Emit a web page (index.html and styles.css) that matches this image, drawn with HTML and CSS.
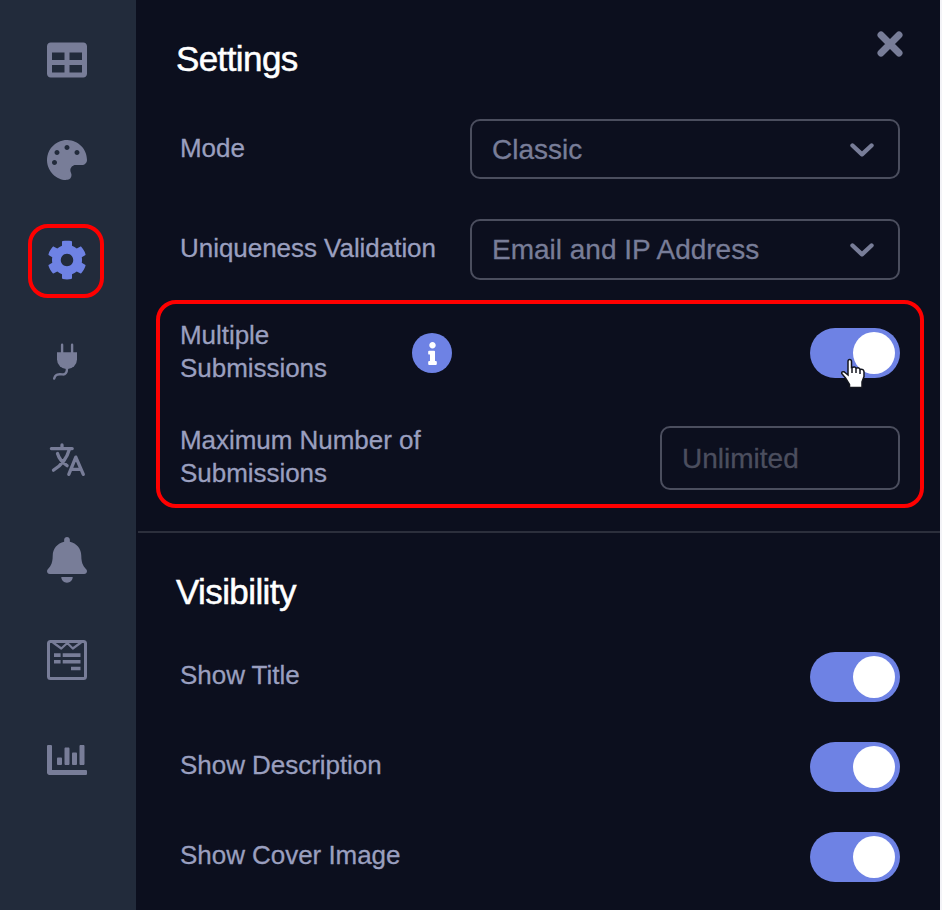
FILE: index.html
```
<!DOCTYPE html>
<html lang="en">
<head>
  <meta charset="UTF-8" />
  <meta name="viewport" content="width=device-width, initial-scale=1.0"/>
  <title>Form Settings</title>
  <link rel="stylesheet" href="styles.css">
</head>
<body>
  <div class="app">
    <!-- Sidebar -->
    <nav class="sidebar">
      <a class="nav-item" title="Fields">
        <svg width="40" height="40" viewBox="0 0 512 512"><path d="M464 32H48C21.49 32 0 53.49 0 80v352c0 26.51 21.49 48 48 48h416c26.51 0 48-21.49 48-48V80c0-26.51-21.49-48-48-48zM224 416H64v-96h160v96zm0-160H64v-96h160v96zm224 160H288v-96h160v96zm0-160H288v-96h160v96z"/></svg>
      </a>
      <a class="nav-item" title="Theme">
        <svg width="40" height="40" viewBox="0 0 512 512"><path d="M204.3 5C104.9 24.4 24.8 104.3 5.2 203.4c-37 187 131.7 326.4 258.8 306.7 41.2-6.4 61.4-54.6 42.5-91.7-23.1-45.4 9.9-98.4 60.9-98.4h79.7c35.8 0 64.8-29.6 64.9-65.3C511.5 97.1 368.1-26.9 204.3 5zM96 320c-17.7 0-32-14.3-32-32s14.3-32 32-32 32 14.3 32 32-14.3 32-32 32zm32-128c-17.7 0-32-14.3-32-32s14.3-32 32-32 32 14.3 32 32-14.3 32-32 32zm128-64c-17.7 0-32-14.3-32-32s14.3-32 32-32 32 14.3 32 32-14.3 32-32 32zm128 64c-17.7 0-32-14.3-32-32s14.3-32 32-32 32 14.3 32 32-14.3 32-32 32z"/></svg>
      </a>
      <a class="nav-item active" title="Settings">
        <svg width="40" height="40" viewBox="0 0 512 512"><path d="M487.4 315.7l-42.6-24.6c4.3-23.2 4.3-47 0-70.2l42.6-24.6c4.9-2.8 7.1-8.6 5.5-14-11.1-35.6-30-67.8-54.7-94.6-3.8-4.1-10-5.1-14.8-2.3L380.8 110c-17.9-15.4-38.5-27.3-60.8-35.1V25.8c0-5.6-3.9-10.5-9.4-11.7-36.7-8.2-74.3-7.8-109.2 0-5.5 1.2-9.4 6.1-9.4 11.7V75c-22.2 7.9-42.8 19.8-60.8 35.1L88.7 85.5c-4.9-2.8-11-1.9-14.8 2.3-24.7 26.7-43.6 58.9-54.7 94.6-1.7 5.4.6 11.2 5.5 14L67.3 221c-4.3 23.2-4.3 47 0 70.2l-42.6 24.6c-4.9 2.8-7.1 8.6-5.5 14 11.1 35.6 30 67.8 54.7 94.6 3.8 4.1 10 5.1 14.8 2.3l42.6-24.6c17.9 15.4 38.5 27.3 60.8 35.1v49.2c0 5.6 3.9 10.5 9.4 11.7 36.7 8.2 74.3 7.8 109.2 0 5.5-1.2 9.4-6.1 9.4-11.7v-49.2c22.2-7.9 42.8-19.8 60.8-35.1l42.6 24.6c4.9 2.8 11 1.9 14.8-2.3 24.7-26.7 43.6-58.9 54.7-94.6 1.5-5.5-.7-11.3-5.6-14.1zM256 336c-44.1 0-80-35.9-80-80s35.9-80 80-80 80 35.9 80 80-35.9 80-80 80z"/></svg>
      </a>
      <a class="nav-item" title="Integrations">
        <svg width="40" height="40" viewBox="0 0 40 40">
          <path d="M10 12.3h20v7a10 10 0 0 1-20 0z"/>
          <path class="line" stroke-width="2.4" d="M15.1 4.8V13M25.1 4.8V13M20 28.5c0 4-1.500 6.2-4.500 5.900-3.500-.3-7.300-.8-8.300 4.200"/>
        </svg>
      </a>
      <a class="nav-item" title="Translations">
        <svg width="40" height="40" viewBox="0 0 40 40">
          <path class="line" stroke-width="3.3" d="M4.4 8.6h20.8M15 5v3.5M22.5 9c-2.500 9-8 16.400-16 21.200M10.500 13.500c1.500 5 4.700 9 9.600 12.200M21.800 34.400l7-17.300 7.500 17.300M24 29.400h10"/>
        </svg>
      </a>
      <a class="nav-item" title="Notifications">
        <svg width="40" height="45.7" viewBox="0 0 448 512"><path d="M224 512c35.32 0 63.97-28.65 63.97-64H160.03c0 35.35 28.65 64 63.97 64zm215.39-149.71c-19.32-20.76-55.47-51.99-55.47-154.29 0-77.7-54.48-139.9-127.94-155.16V32c0-17.67-14.32-32-31.98-32s-31.98 14.33-31.98 32v20.84C118.56 68.1 64.08 130.3 64.08 208c0 102.3-36.15 133.53-55.47 154.29-6 6.45-8.66 14.16-8.61 21.71.11 16.4 12.98 32 32.1 32h383.8c19.12 0 32-15.6 32.1-32 .05-7.55-2.61-15.27-8.61-21.71z"/></svg>
      </a>
      <a class="nav-item" title="Submissions">
        <svg width="40" height="40" viewBox="0 0 40 40">
          <rect class="line" stroke-width="3" x="1.5" y="1.5" width="37" height="37" rx="2"/>
          <path class="line" stroke-width="2.2" d="M6 2.5l8.3 6L20.3 3l5.5 5.5L34 2.5"/>
          <path d="M7 13.3h6.6V17H7zM15.7 13.3h17.8V17H15.7zM7 20h6.6v3.5H7zM15.7 20h17.8v3.5H15.7zM24 26.7h9.5v3.6H24z"/>
        </svg>
      </a>
      <a class="nav-item" title="Reports">
        <svg width="40" height="40" viewBox="0 0 512 512"><path d="M332.8 320h38.4c6.4 0 12.8-6.4 12.8-12.8V172.8c0-6.4-6.4-12.8-12.8-12.8h-38.4c-6.4 0-12.8 6.4-12.8 12.8v134.4c0 6.4 6.4 12.8 12.8 12.8zm96 0h38.4c6.4 0 12.8-6.4 12.8-12.8V76.8c0-6.4-6.4-12.8-12.8-12.8h-38.4c-6.4 0-12.8 6.4-12.8 12.8v230.4c0 6.4 6.4 12.8 12.8 12.8zm-288 0h38.4c6.4 0 12.8-6.4 12.8-12.8v-70.4c0-6.4-6.4-12.8-12.8-12.8h-38.4c-6.4 0-12.8 6.4-12.8 12.8v70.4c0 6.4 6.4 12.8 12.8 12.8zm96 0h38.4c6.4 0 12.8-6.4 12.8-12.8V108.8c0-6.4-6.4-12.8-12.8-12.8h-38.4c-6.4 0-12.8 6.4-12.8 12.8v198.4c0 6.4 6.4 12.8 12.8 12.8zM496 384H64V80c0-8.84-7.16-16-16-16H16C7.16 64 0 71.16 0 80v336c0 17.67 14.33 32 32 32h464c8.84 0 16-7.16 16-16v-32c0-8.84-7.16-16-16-16z"/></svg>
      </a>
    </nav>

    <!-- Settings Panel -->
    <main class="panel">
      <section class="section">
        <div class="section-header">
          <h2>Settings</h2>
          <button class="close" aria-label="Close">
            <svg width="26" height="26" viewBox="0 0 26 26"><path class="line" stroke-width="7" d="M4 4l18 18M22 4L4 22"/></svg>
          </button>
        </div>
        <div class="row">
          <span class="label">Mode</span>
          <div class="select">
            <span>Classic</span>
            <svg width="24" height="14" viewBox="0 0 24 14"><path class="line" stroke-width="4.4" d="M2.5 2.5L12 11.3l9.5-8.8"/></svg>
          </div>
        </div>
        <div class="row">
          <span class="label">Uniqueness Validation</span>
          <div class="select tall">
            <span>Email and IP Address</span>
            <svg width="24" height="14" viewBox="0 0 24 14"><path class="line" stroke-width="4.4" d="M2.5 2.5L12 11.3l9.5-8.8"/></svg>
          </div>
        </div>
        <div class="highlight-group">
          <div class="row">
            <span class="label label-narrow">Multiple Submissions</span>
            <span class="info">
              <svg width="9" height="23" viewBox="0 0 192 512"><path d="M20 424.229h20V279.771H20c-11.046 0-20-8.954-20-20V212c0-11.046 8.954-20 20-20h112c11.046 0 20 8.954 20 20v212.229h20c11.046 0 20 8.954 20 20V492c0 11.046-8.954 20-20 20H20c-11.046 0-20-8.954-20-20v-47.771c0-11.046 8.954-20 20-20zM96 0C56.235 0 24 32.235 24 72s32.235 72 72 72 72-32.235 72-72S135.764 0 96 0z"/></svg>
            </span>
            <span class="switch">
              <!-- Pointer -->
              <svg class="cursor" width="26" height="32" viewBox="0 0 26 32"><path d="M8 14.5V3.5Q8 1.5 9.7 1.5T11.5 3.5V9.5Q15.5 8 16 10.3Q19.3 9 20 11.4Q23.8 10.7 24 14V18.5L22 24V29.5H9.5V26.5L5.5 20L1.7 15.5Q1.5 13.3 4 13.7L8 17z"/><path class="fingers" d="M12 9.5v5.5M16 10.5V15M20 11.5V16"/></svg>
            </span>
          </div>
          <div class="row">
            <span class="label label-wide">Maximum Number of Submissions</span>
            <input class="number" type="text" placeholder="Unlimited">
          </div>
        </div>
      </section>

      <section class="section visibility">
        <h2>Visibility</h2>
        <div class="row">
          <span class="label">Show Title</span>
          <span class="switch"></span>
        </div>
        <div class="row">
          <span class="label">Show Description</span>
          <span class="switch"></span>
        </div>
        <div class="row">
          <span class="label">Show Cover Image</span>
          <span class="switch"></span>
        </div>
      </section>
    </main>
  </div>
</body>
</html>
```
FILE: styles.css
```
*,
*::before,
*::after {
  box-sizing: border-box;
}

body {
  margin: 0;
  background: #f3f3f7;
  font-family: "Liberation Sans", Arial, sans-serif;
  overflow: hidden;
}

svg {
  display: block;
  fill: currentColor;
}

.line {
  fill: none;
  stroke: currentColor;
  stroke-linecap: round;
  stroke-linejoin: round;
}

.app {
  display: flex;
  width: 940px;
  height: 910px;
  background: #0c0f1e;
}

/* Sidebar */
.sidebar {
  flex-shrink: 0;
  width: 136px;
  padding: 10px 0 0;
  background: #222b3b;
  color: #787d98;
}

.nav-item {
  position: relative;
  display: flex;
  align-items: center;
  justify-content: center;
  height: 100px;
  padding-right: 2px;
}

.nav-item.active {
  color: #6e82e4;
}

.nav-item.active::after {
  content: "";
  position: absolute;
  left: 28px;
  top: 14px;
  width: 76px;
  height: 74px;
  border: 4px solid #ff0000;
  border-radius: 20px;
}

/* Panel */
.panel {
  flex: 1;
  min-width: 0;
  padding-left: 2px;
}

.section {
  padding: 0 40px 0 42px;
}

h2 {
  margin: 0 0 0 -4px;
  font-size: 35px;
  font-weight: normal;
  line-height: 40px;
  letter-spacing: -0.6px;
  color: #fff;
  -webkit-text-stroke: 0.5px #fff;
}

.section-header {
  display: flex;
  justify-content: space-between;
  height: 99px;
  padding-top: 39px;
}

.close {
  height: 26px;
  margin: -8px -3px 0 0;
  padding: 0;
  border: none;
  background: none;
  color: #787d98;
}

.row {
  display: flex;
  align-items: center;
  justify-content: space-between;
  height: 100px;
}

.label {
  font-size: 26px;
  line-height: 33px;
  letter-spacing: -0.04px;
  color: #9a9fbf;
  padding-bottom: 2px;
  -webkit-text-stroke: 0.3px #9a9fbf;
}

.label-narrow {
  width: 200px;
}

.label-wide {
  width: 260px;
}

.select {
  display: flex;
  align-items: center;
  justify-content: space-between;
  width: 430px;
  height: 60px;
  padding: 2px 24px 0 20px;
  border: 2px solid #4b4e5e;
  border-radius: 10px;
  font-size: 28px;
  color: #787d98;
  -webkit-text-stroke: 0.3px #787d98;
}

.select.tall {
  height: 61px;
}

/* Highlighted rows */
.highlight-group {
  height: 208px;
  margin: 1px -24px 0;
  padding: 0 20px;
  border: 4px solid #ff0000;
  border-radius: 20px;
}

.highlight-group .row {
  height: 98px;
}

.highlight-group .row + .row {
  height: 112px;
}

.info {
  display: flex;
  align-items: center;
  justify-content: center;
  width: 40px;
  height: 40px;
  margin: 0 auto 0 32px;
  border-radius: 50%;
  background: #6e82e4;
  color: #fff;
}

.switch {
  position: relative;
  display: flex;
  align-items: center;
  justify-content: flex-end;
  width: 90px;
  height: 50px;
  padding-right: 5px;
  border-radius: 25px;
  background: #6e82e4;
}

.switch::before {
  content: "";
  width: 42px;
  height: 42px;
  border-radius: 50%;
  background: #fff;
}

.cursor {
  position: absolute;
  left: 30px;
  top: 30px;
  fill: #fff;
  stroke: #14161f;
  stroke-width: 1.5px;
}

.cursor .fingers {
  fill: none;
}

.number {
  width: 240px;
  height: 64px;
  padding: 2px 20px 0;
  border: 2px solid #4b4e5e;
  border-radius: 10px;
  background: none;
  font-family: inherit;
  font-size: 28px;
  color: #787d98;
}

.number::placeholder {
  color: #4b4e5e;
  -webkit-text-stroke: 0.3px #4b4e5e;
}

/* Visibility */
.visibility {
  margin-top: 23px;
  padding-top: 39px;
  border-top: 2px solid #2c2f3c;
}

.visibility h2 {
  margin-bottom: 20px;
}

.visibility .row {
  height: 90px;
}

.visibility .label {
  padding-bottom: 4px;
}
```
